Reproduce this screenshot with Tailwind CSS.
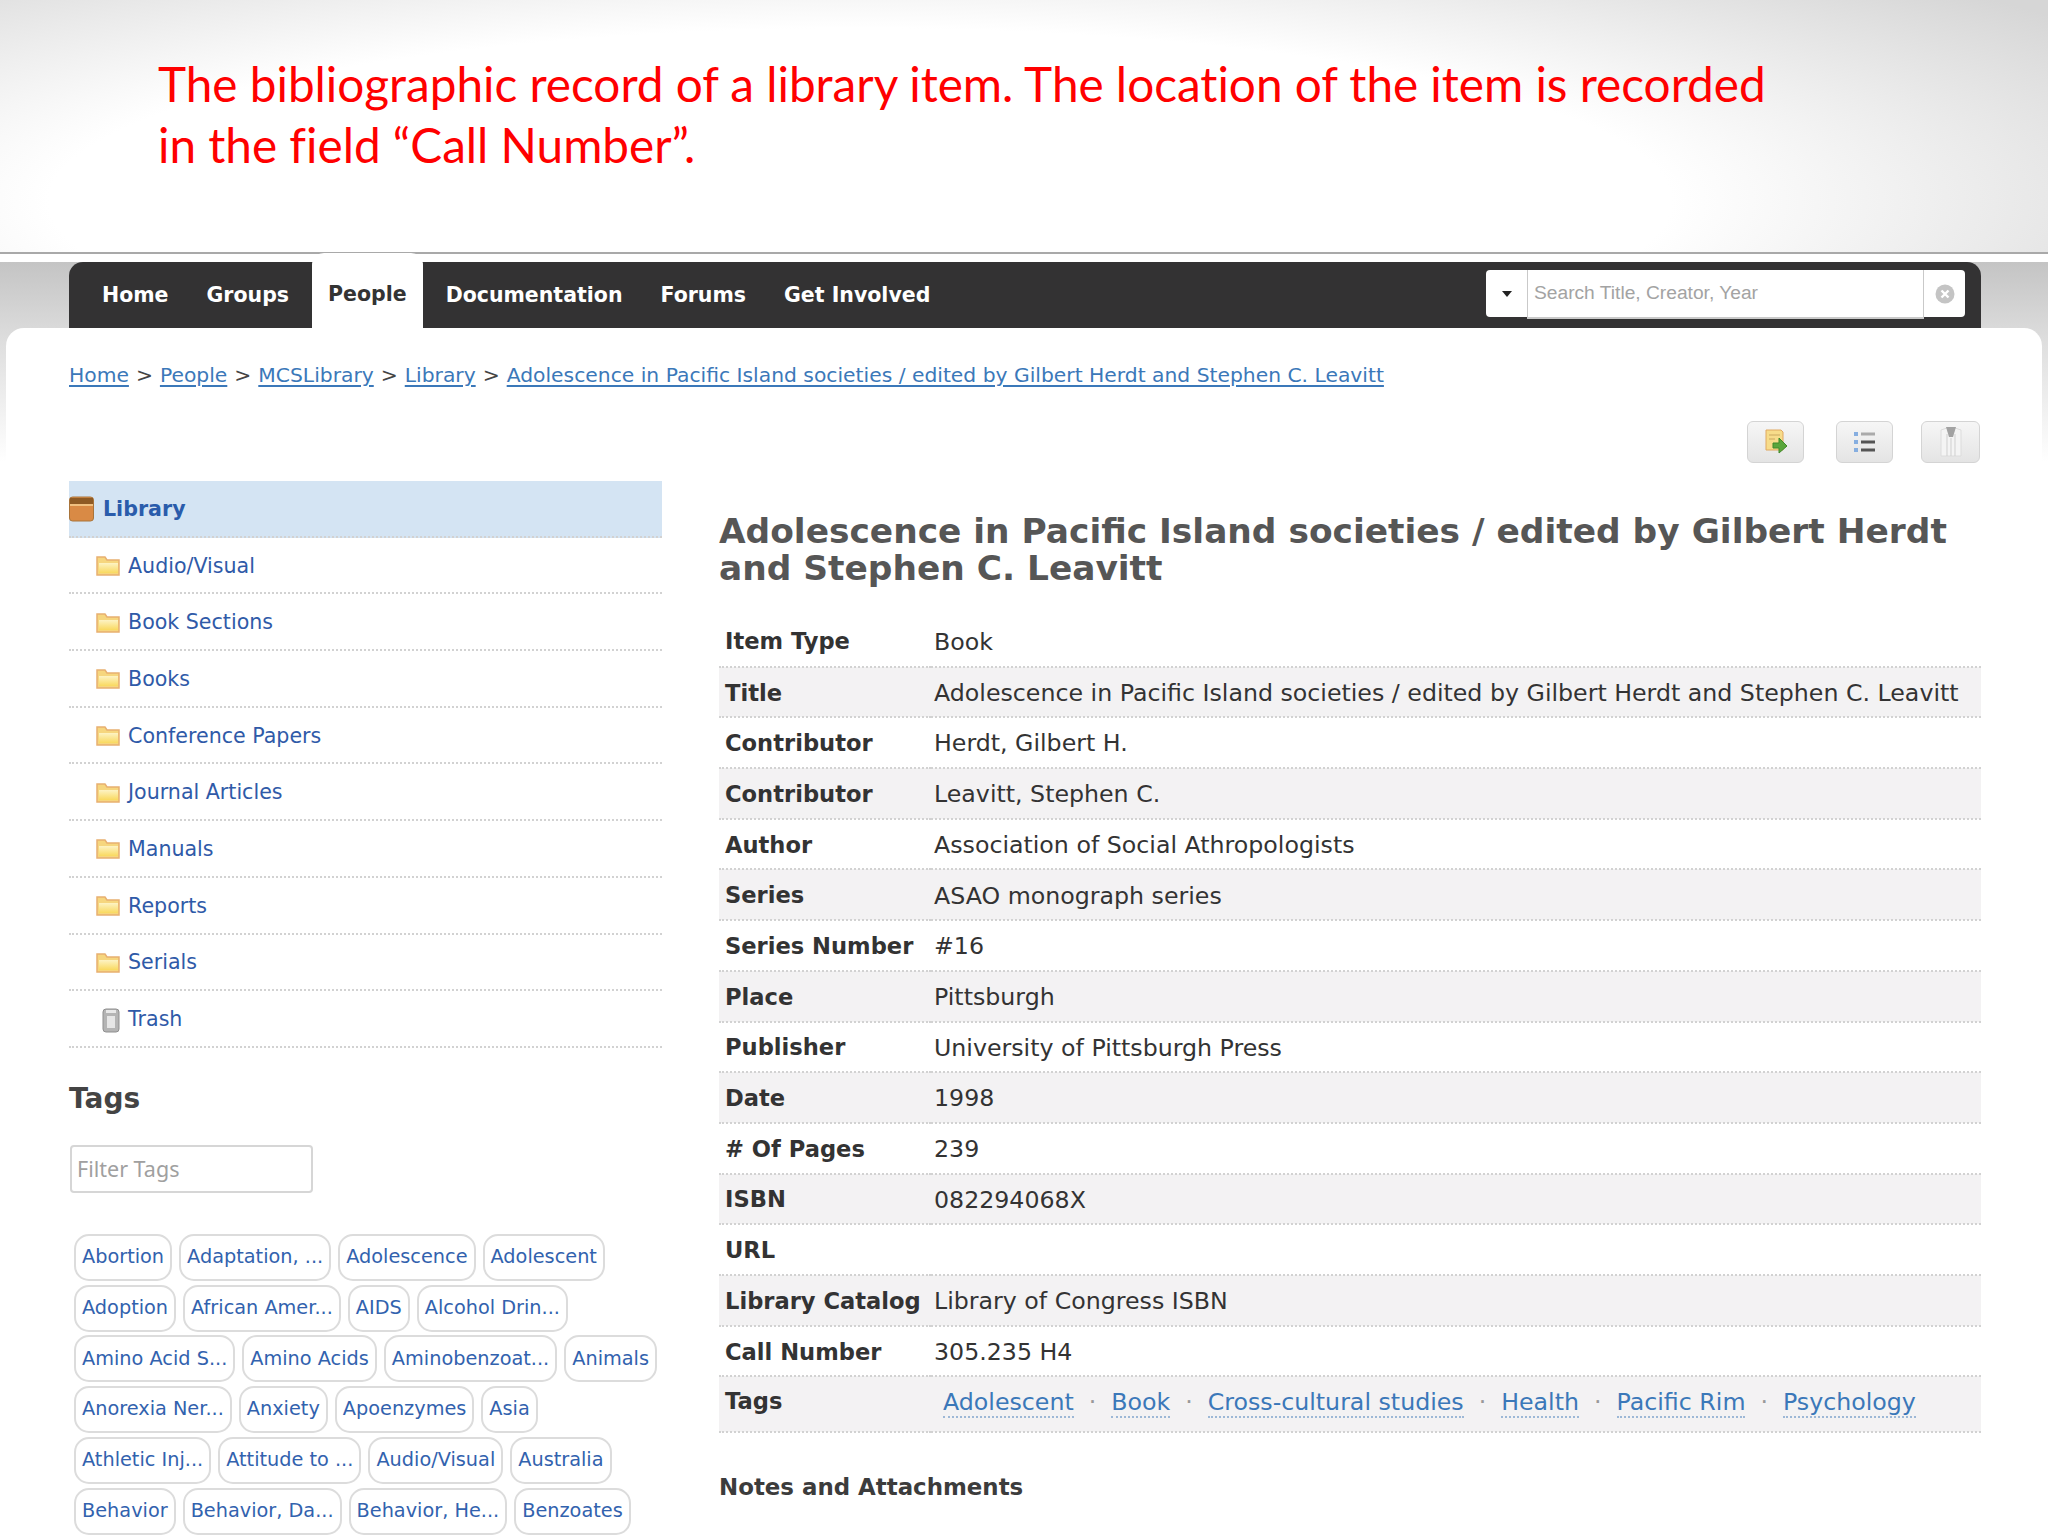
<!DOCTYPE html>
<html lang="en">
  <head>
    <meta charset="UTF-8" />
    <title>Library item</title>
    <script src="https://cdn.jsdelivr.net/npm/@tailwindcss/browser@4"></script>
  </head>
  <body class="bg-white">
    <div class="relative h-[1536px] w-[2048px] overflow-hidden font-['DejaVu_Sans',sans-serif]">
      <!-- Slide caption -->
      <header class="h-[254px] pl-[158px] pt-[53px] bg-[radial-gradient(ellipse_72%_125%_at_42%_80%,#ffffff_55%,#d6d6d6_100%)] border-b-2 border-[#a9a9a9]">
        <p class="w-[1700px] font-['Lato',sans-serif] text-[47.7px] leading-[61px] text-[#ff0000] [font-variant-ligatures:none]">
          The bibliographic record of a library item. The location of the item is recorded<br />in the field “Call Number”.
        </p>
      </header>

      <div class="h-[1282px] bg-[linear-gradient(180deg,#c4c4c4_0,#dedede_80px,#ffffff_200px)]">
        <!-- Nav bar -->
        <nav class="relative ml-[69px] mr-[67px] mt-[8px] h-[66px] flex items-center bg-[#333233] rounded-t-[14px] pl-[14px]">
          <ul id="nav" class="flex h-full items-center font-bold text-[20.5px] text-white"></ul>
          <div class="absolute left-[1417px] top-[8px] flex h-[47px] w-[479px] rounded-[4px] bg-white">
            <div class="flex w-[41px] items-center justify-center">
              <svg width="12" height="8" viewBox="0 0 12 8"><path d="M1 1h10L6 7z" fill="#222" /></svg>
            </div>
            <div class="flex h-[49px] w-[397px] items-center border-x border-b-2 border-[#c9c9c9] bg-white pl-[6px] font-['Liberation_Sans',sans-serif] text-[19.2px] text-[#a3a3a3]">Search Title, Creator, Year</div>
            <div class="flex flex-1 items-center justify-center">
              <svg width="20" height="20" viewBox="0 0 20 20"><circle cx="10" cy="10" r="9.5" fill="#c4c4c4" /><path d="M6.5 6.5l7 7M13.5 6.5l-7 7" stroke="#fff" stroke-width="2.4" /></svg>
            </div>
          </div>
        </nav>

        <!-- Content card -->
        <main class="relative mx-[6px] h-[1300px] rounded-t-[18px] bg-white pl-[63px] pr-[60px] pt-[33px]">
          <div id="crumbs" class="flex h-[28px] items-center gap-[7px] text-[20.3px] leading-[28px] text-[#444]"></div>

          <div class="flex justify-end mt-[32px] h-[42px] mr-[2px]">
            <button class="flex h-[42px] w-[57px] items-center justify-center rounded-[6px] border border-[#d4d4d4] bg-[linear-gradient(180deg,#f6f6f6,#e4e4e4)]">
              <svg width="26" height="28" viewBox="0 0 26 28"><path d="M3 2h15l2 2v18H3z" fill="#f7dc8a" stroke="#e0a860" /><path d="M6 7h11M6 11h6" stroke="#caa860" /><path d="M10 15h6v-5l8 8-8 7v-5h-6z" fill="#5aa63c" stroke="#3f8a2a" /></svg>
            </button>
            <button class="ml-[32px] flex h-[42px] w-[57px] items-center justify-center rounded-[6px] border border-[#d4d4d4] bg-[linear-gradient(180deg,#f6f6f6,#e4e4e4)]">
              <svg width="24" height="24" viewBox="0 0 24 24"><path d="M1 2h4v4H1zM1 10h4v4H1zM1 18h4v4H1z" fill="#86aee0" /><path d="M8 4h14" stroke="#aaa" stroke-width="3" /><path d="M8 12h14" stroke="#555" stroke-width="3" /><path d="M8 20h14" stroke="#555" stroke-width="3" /></svg>
            </button>
            <button class="ml-[28px] flex h-[42px] w-[59px] items-center justify-center rounded-[6px] border border-[#d4d4d4] bg-[linear-gradient(180deg,#f6f6f6,#e4e4e4)]">
              <svg width="28" height="32" viewBox="0 0 28 32"><path d="M4 4l6-2h8l6 2v26H4z" fill="#f4f4f4" stroke="#dcdcdc" /><path d="M14 12v18M10 8v22M18 8v22" stroke="#cfcfcf" /><path d="M9 1h10l-3 10h-4z" fill="#a2a2a2" /></svg>
            </button>
          </div>

          <div class="mt-[18px] flex">
            <!-- Sidebar -->
            <aside class="w-[593px] shrink-0">
              <ul id="folders" class="text-[20.6px] text-[#2f5aa8]"></ul>
              <h3 class="mt-[33px] text-[28px] leading-[36px] font-bold text-[#444]">Tags</h3>
              <div class="ml-[1px] mt-[28px] flex h-[48px] w-[243px] items-center rounded-[4px] border-2 border-[#d6d6d6] pl-[5px] text-[21.5px] text-[#a0a0a0] font-['Noto_Sans',sans-serif]">Filter Tags</div>
              <div id="tags" class="ml-[5px] mt-[41px] flex w-[590px] flex-wrap gap-x-[7px] gap-y-[3.8px] text-[19.3px] text-[#3262ae]"></div>
            </aside>

            <!-- Record -->
            <section class="ml-[57px] w-[1262px] shrink-0">
              <h1 class="mt-[32px] text-[34.4px] leading-[37px] font-bold text-[#565656]">Adolescence in Pacific Island societies / edited by Gilbert Herdt and Stephen C. Leavitt</h1>
              <table class="mt-[29px] w-full border-collapse text-[23.7px] text-[#333]">
                <tbody id="fields"></tbody>
              </table>
              <h2 class="mt-[34px] text-[22.9px] leading-[40px] font-bold text-[#3c3c3c]">Notes and Attachments</h2>
            </section>
          </div>
        </main>
      </div>
    </div>

    <script>
      const navItems = ["Home", "Groups", "People", "Documentation", "Forums", "Get Involved"];
      const crumbs = ["Home", "People", "MCSLibrary", "Library", "Adolescence in Pacific Island societies / edited by Gilbert Herdt and Stephen C. Leavitt"];
      const folders = ["Audio/Visual", "Book Sections", "Books", "Conference Papers", "Journal Articles", "Manuals", "Reports", "Serials"];
      const tags = [
        "Abortion", "Adaptation, ...", "Adolescence", "Adolescent",
        "Adoption", "African Amer...", "AIDS", "Alcohol Drin...",
        "Amino Acid S...", "Amino Acids", "Aminobenzoat...", "Animals",
        "Anorexia Ner...", "Anxiety", "Apoenzymes", "Asia",
        "Athletic Inj...", "Attitude to ...", "Audio/Visual", "Australia",
        "Behavior", "Behavior, Da...", "Behavior, He...", "Benzoates",
      ];
      const fields = [
        ["Item Type", "Book"],
        ["Title", "Adolescence in Pacific Island societies / edited by Gilbert Herdt and Stephen C. Leavitt"],
        ["Contributor", "Herdt, Gilbert H."],
        ["Contributor", "Leavitt, Stephen C."],
        ["Author", "Association of Social Athropologists"],
        ["Series", "ASAO monograph series"],
        ["Series Number", "#16"],
        ["Place", "Pittsburgh"],
        ["Publisher", "University of Pittsburgh Press"],
        ["Date", "1998"],
        ["# Of Pages", "239"],
        ["ISBN", "082294068X"],
        ["URL", ""],
        ["Library Catalog", "Library of Congress ISBN"],
        ["Call Number", "305.235 H4"],
      ];
      const rowTags = ["Adolescent", "Book", "Cross-cultural studies", "Health", "Pacific Rim", "Psychology"];

      const folderIcon = `<svg width="26" height="24" viewBox="0 0 26 24" class="shrink-0"><defs><linearGradient id="fg" x1="0" y1="0" x2="0" y2="1"><stop offset="0" stop-color="#fdf3c4" /><stop offset="1" stop-color="#f9d95f" /></linearGradient></defs><path d="M2 3h8l2 3h12v15H2z" fill="#f6d67e" stroke="#e8b070" stroke-width="1.5" /><path d="M4 9h19v10H4z" fill="url(#fg)" /></svg>`;
      const boxIcon = `<svg width="25" height="26" viewBox="0 0 25 26" class="shrink-0 mr-[9px]"><rect x="0.5" y="1" width="24" height="24" rx="3" fill="#d98a45" stroke="#a9743a" /><path d="M1 2h23v6H1z" fill="#8e5a24" /><path d="M1 8h23v2H1z" fill="#f0c080" /></svg>`;
      const trashIcon = `<svg width="20" height="26" viewBox="0 0 20 26" class="shrink-0"><rect x="2" y="2" width="16" height="23" rx="3" fill="#b4b4b4" stroke="#8f8f8f" /><path d="M5 3h10v3H5z" fill="#e8e8e8" /><path d="M6 9h8v12H6z" fill="#e6e6e6" /></svg>`;

      document.getElementById("nav").innerHTML = navItems
        .map((n) =>
          n === "People"
            ? `<li class="relative self-end mx-[4px] flex h-[75px] items-center rounded-t-[12px] bg-white px-[16px] pt-[8px] text-[#333]">${n}</li>`
            : `<li class="px-[19px]">${n}</li>`
        )
        .join("");

      document.getElementById("crumbs").innerHTML = crumbs
        .map((c) => `<a class="text-[#3b78b9] underline underline-offset-[3px]">${c}</a>`)
        .join("<span>&gt;</span>");

      const folderRow = (icon, label, cls) =>
        `<li class="flex h-[56.7px] items-center pt-[2px] border-b-2 border-dotted border-[#d2d2d2] ${cls}">${icon}${label}</li>`;
      document.getElementById("folders").innerHTML =
        folderRow(boxIcon, "Library", "bg-[#d4e4f3] font-bold text-[#2a5cab]") +
        folders.map((f) => folderRow(`<span class="ml-[26px] mr-[7px] flex">${folderIcon}</span>`, f, "")).join("") +
        folderRow(`<span class="ml-[32px] mr-[7px] flex">${trashIcon}</span>`, "Trash", "");

      document.getElementById("tags").innerHTML = tags
        .map((t) => `<span class="flex h-[47px] items-center rounded-[15px] border-2 border-[#dcdcdc] px-[6px]">${t}</span>`)
        .join("");

      const row = (label, value, i) =>
        `<tr class="h-[50.7px] border-b-2 border-dotted border-[#d2d2d2] ${i % 2 ? "bg-[#f3f2f3]" : "bg-white"}">
          <th class="w-[212px] pl-[6px] pt-[3px] text-left text-[22.6px] font-bold whitespace-nowrap text-[#333]">${label}</th>
          <td class="pl-[3px] pt-[3px] whitespace-nowrap">${value}</td>
        </tr>`;
      const tagLinks = rowTags
        .map((t) => `<a class="border-b-2 border-dotted border-[#9db8d6] text-[#3b78b9]">${t}</a>`)
        .join(`<span class="mx-[15px] text-[#999]">·</span>`);
      document.getElementById("fields").innerHTML =
        fields.map(([l, v], i) => row(l, v, i)).join("") +
        `<tr class="h-[56px] border-b-2 border-dotted border-[#d2d2d2] bg-[#f3f2f3]">
          <th class="w-[212px] pl-[6px] pb-[4px] text-left text-[22.6px] font-bold text-[#333]">Tags</th>
          <td class="pl-[3px] pb-[4px] whitespace-nowrap"><span class="ml-[9px]">${tagLinks}</span></td>
        </tr>`;
    </script>
  </body>
</html>
